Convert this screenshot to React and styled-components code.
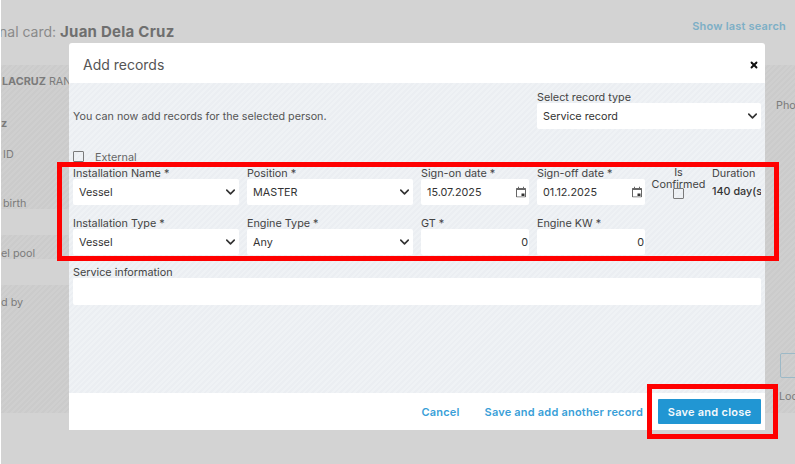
import React from "react";
import styled, { createGlobalStyle } from "styled-components";
import { ChevronDown, X } from "lucide-react";

const GlobalStyle = createGlobalStyle`
  html, body {
    margin: 0;
    padding: 0;
    background: #fff;
  }
  body {
    width: 795px;
    height: 464px;
    overflow: hidden;
    font-family: "Inter", "Liberation Sans", sans-serif;
  }
`;

const Page = styled.div`
  position: relative;
  width: 794px;
  height: 464px;
  margin-left: 1px;
  background: #d3d3d3;
  overflow: hidden;
  display: flex;
  flex-direction: column;
`;

const TopBar = styled.div`
  height: 65px;
  display: flex;
  justify-content: space-between;
  padding: 21px 9px 0 0;
  box-sizing: border-box;
`;

const CardTitle = styled.h1`
  margin: 0 0 0 -2px;
  font-size: 14px;
  line-height: 22px;
  font-weight: 400;
  color: #8a8a8a;

  b {
    font-size: 15px;
    font-weight: 700;
    letter-spacing: 0.25px;
    color: #6f6f6f;
  }
`;

const LastSearch = styled.a`
  margin-top: -1px;
  font-size: 11px;
  line-height: 13px;
  font-weight: 600;
  letter-spacing: 0.2px;
  color: #7dafc6;
`;

const BackPanel = styled.div`
  height: 348px;
  display: flex;
  justify-content: space-between;
  background: repeating-linear-gradient(135deg, #cfcfcf 0 2px, #cbcbcb 2px 4px);
`;

const BackColumn = styled.div`
  width: 68px;
  display: flex;
  flex-direction: column;
`;

const BackLabel = styled.div`
  height: 12px;
  line-height: 14px;
  font-size: 10.8px;
  margin-top: ${(p) => p.$top}px;
  padding-left: ${(p) => p.$left || 0}px;
  font-weight: ${(p) => (p.$bold ? 700 : 400)};
  color: #7b7b7b;
  white-space: nowrap;
`;

const BackInput = styled.div`
  height: 26px;
  background: #d3d3d3;
`;

const BackSide = styled.div`
  width: 30px;
  display: flex;
  flex-direction: column;
  overflow: hidden;
`;

const BackButton = styled.div`
  width: 40px;
  height: 25px;
  margin: 242px 0 0 15px;
  flex: none;
  border: 1px solid #9db9c7;
  border-radius: 2px;
  box-sizing: border-box;
`;

const Modal = styled.section`
  position: absolute;
  left: 68px;
  top: 43px;
  width: 696px;
  height: 387px;
  display: flex;
  flex-direction: column;
  background: #fff;
  border-radius: 3px 3px 0 0;
  overflow: hidden;
`;

const ModalHeader = styled.header`
  height: 40px;
  flex: none;
  display: flex;
  align-items: center;
  justify-content: space-between;
  padding: 3px 6px 0 14px;
  box-sizing: border-box;
`;

const ModalTitle = styled.h2`
  margin: 0;
  font-size: 14px;
  font-weight: 400;
  color: #555;
`;

const ModalBody = styled.div`
  flex: 1;
  padding: 8px 4px 0;
  background: repeating-linear-gradient(135deg, #eff2f5 0 2px, #ebeef2 2px 4px);
`;

const TypeRow = styled.div`
  display: flex;
  justify-content: space-between;
  align-items: flex-end;
`;

const Intro = styled.p`
  margin: 0;
  height: 26px;
  line-height: 28px;
  font-size: 10.75px;
  color: #555;
`;

const TypeField = styled.div`
  width: 224px;
`;

const ExternalRow = styled.label`
  display: flex;
  align-items: flex-start;
  gap: 11px;
  height: 11px;
  margin-top: 22px;
  line-height: 13px;
  font-size: 10.8px;
  color: #666;
`;

const Box = styled.span`
  display: block;
  flex: none;
  width: 11px;
  height: 11px;
  border: 1px solid #7a7a7a;
  box-sizing: border-box;
  border-radius: 1px;
`;

const FormGrid = styled.div`
  display: grid;
  grid-template-columns: 166px 166px 108px 108px 51px 49px;
  column-gap: 8px;
  row-gap: 12px;
  margin-top: 5px;
`;

const Field = styled.div`
  min-width: 0;
  margin-top: ${(p) => p.$top || 0}px;
`;

const Label = styled.div`
  height: 12px;
  line-height: 13px;
  font-size: 10.8px;
  color: #444;
  white-space: nowrap;
`;

const Control = styled.div`
  position: relative;
  height: ${(p) => (p.$tall ? 27 : 26)}px;
  background: #fff;
  border-radius: 2px;
  color: #333;
  font-size: 10.8px;
`;

const SelectBox = styled.select`
  width: 100%;
  height: 100%;
  padding: 0 0 0 6px;
  border: 0;
  outline: 0;
  appearance: none;
  background: transparent;
  font: inherit;
  color: inherit;
`;

const TextBox = styled.input`
  width: 100%;
  height: 100%;
  padding: 0 1px 0 6px;
  border: 0;
  outline: 0;
  box-sizing: border-box;
  background: transparent;
  font: inherit;
  color: inherit;
  text-align: ${(p) => p.$align || "left"};
`;

const Adornment = styled.span`
  position: absolute;
  right: ${(p) => p.$right}px;
  top: 50%;
  transform: translateY(-50%);
  display: flex;
  color: #333;
  pointer-events: none;
`;

const ConfirmField = styled.div`
  display: flex;
  flex-direction: column;
  align-items: center;
`;

const ConfirmLabel = styled.div`
  height: 24px;
  width: 60px;
  line-height: 12px;
  font-size: 10.8px;
  text-align: center;
  color: #444;
`;

const Duration = styled.div`
  height: 26px;
  line-height: 26px;
  font-size: 10.8px;
  font-weight: 500;
  color: #333;
  white-space: nowrap;
  overflow: hidden;
`;

const ConfirmBox = styled(Box)`
  margin-top: -3px;
`;

const ModalFooter = styled.footer`
  height: 37px;
  flex: none;
  display: flex;
  align-items: center;
  justify-content: flex-end;
  padding-right: 4px;
  box-sizing: border-box;
`;

const LinkButton = styled.button`
  border: 0;
  padding: 0;
  margin-right: ${(p) => p.$gap}px;
  background: none;
  font: 600 11px "Inter", "Liberation Sans", sans-serif;
  letter-spacing: 0.2px;
  color: #3a9fd8;
`;

const PrimaryButton = styled.button`
  width: 103px;
  height: 25px;
  border: 0;
  border-radius: 1px;
  background: #2196d3;
  font: 600 11px "Inter", "Liberation Sans", sans-serif;
  letter-spacing: 0.25px;
  color: #f4f9fc;
`;

const Callout = styled.div`
  position: absolute;
  left: ${(p) => p.$x}px;
  top: ${(p) => p.$y}px;
  width: ${(p) => p.$w}px;
  height: ${(p) => p.$h}px;
  border: 5px solid #ff0000;
  box-sizing: border-box;
  pointer-events: none;
`;

const CalendarIcon = () => (
  <svg width="10" height="11" viewBox="0 0 10 11" fill="none">
    <path d="M.5 2h9v8.500h-9z" stroke="#666" />
    <path d="M0 2h10v1.500H0zM2 0h1v2H2zM7 0h1v2H7z" fill="#666" />
    <path d="M5.500 7h3v2.500h-3z" fill="#333" />
  </svg>
);

const Select = ({ value }) => (
  <Control>
    <SelectBox defaultValue={value}>
      <option>{value}</option>
    </SelectBox>
    <Adornment $right={1}>
      <ChevronDown size={15} strokeWidth={2.6} />
    </Adornment>
  </Control>
);

const DateInput = ({ value }) => (
  <Control>
    <TextBox defaultValue={value} />
    <Adornment $right={3}>
      <CalendarIcon />
    </Adornment>
  </Control>
);

const App = () => {
  return (
    <>
      <GlobalStyle />
      <Page>
        <TopBar>
          <CardTitle>
            nal card: <b>Juan Dela Cruz</b>
          </CardTitle>
          <LastSearch>Show last search</LastSearch>
        </TopBar>
        <BackPanel>
          <BackColumn>
            <BackLabel $top={10} $left={1}>
              <b>LACRUZ</b> RAN
            </BackLabel>
            <BackLabel $top={30} $bold>z</BackLabel>
            <BackLabel $top={19} $left={2}>ID</BackLabel>
            <BackLabel $top={37} $left={2}>birth</BackLabel>
            <BackInput />
            <BackLabel $top={12}>el pool</BackLabel>
            <BackInput />
            <BackLabel $top={11}>d by</BackLabel>
          </BackColumn>
          <BackSide>
            <BackLabel $top={34} $left={11}>Phone</BackLabel>
            <BackButton />
            <BackLabel $top={12} $left={14}>Location</BackLabel>
          </BackSide>
        </BackPanel>

        <Modal>
          <ModalHeader>
            <ModalTitle>Add records</ModalTitle>
            <X size={10} strokeWidth={4.5} color="#111" />
          </ModalHeader>
          <ModalBody>
            <TypeRow>
              <Intro>You can now add records for the selected person.</Intro>
              <TypeField>
                <Label>Select record type</Label>
                <Select value="Service record" />
              </TypeField>
            </TypeRow>
            <ExternalRow>
              <Box />
              External
            </ExternalRow>
            <FormGrid>
              <Field>
                <Label>Installation Name *</Label>
                <Select value="Vessel" />
              </Field>
              <Field>
                <Label>Position *</Label>
                <Select value="MASTER" />
              </Field>
              <Field>
                <Label>Sign-on date *</Label>
                <DateInput value="15.07.2025" />
              </Field>
              <Field>
                <Label>Sign-off date *</Label>
                <DateInput value="01.12.2025" />
              </Field>
              <ConfirmField>
                <ConfirmLabel>Is Confirmed</ConfirmLabel>
                <ConfirmBox />
              </ConfirmField>
              <Field>
                <Label>Duration</Label>
                <Duration>140 day(s)</Duration>
              </Field>
              <Field>
                <Label>Installation Type *</Label>
                <Select value="Vessel" />
              </Field>
              <Field>
                <Label>Engine Type *</Label>
                <Select value="Any" />
              </Field>
              <Field>
                <Label>GT *</Label>
                <Control>
                  <TextBox $align="right" defaultValue="0" />
                </Control>
              </Field>
              <Field>
                <Label>Engine KW *</Label>
                <Control>
                  <TextBox $align="right" defaultValue="0" />
                </Control>
              </Field>
            </FormGrid>
            <Field $top={11}>
              <Label>Service information</Label>
              <Control $tall />
            </Field>
          </ModalBody>
          <ModalFooter>
            <LinkButton $gap={25}>Cancel</LinkButton>
            <LinkButton $gap={15}>Save and add another record</LinkButton>
            <PrimaryButton>Save and close</PrimaryButton>
          </ModalFooter>
        </Modal>

        <Callout $x={56} $y={162} $w={722} $h={99} />
        <Callout $x={646} $y={384} $w={131} $h={55} />
      </Page>
    </>
  );
};

export default App;
